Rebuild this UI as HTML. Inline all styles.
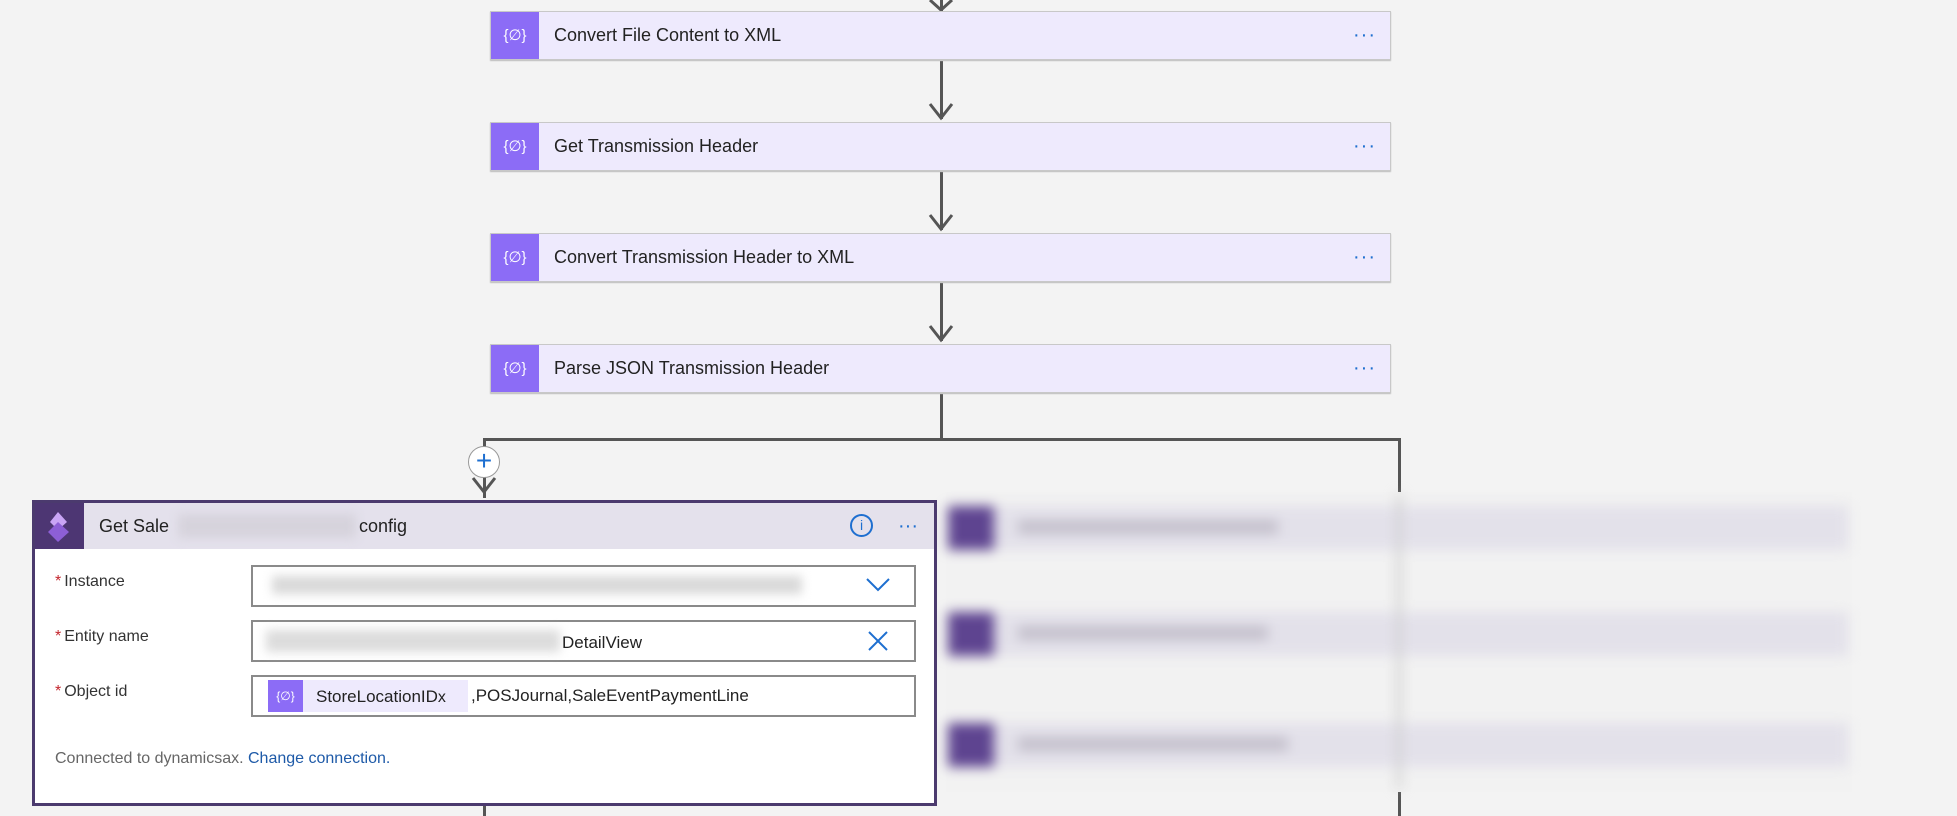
<!DOCTYPE html>
<html><head><style>
body{margin:0;width:1957px;height:816px;background:#f3f3f3;font-family:"Liberation Sans",sans-serif;position:relative;overflow:hidden}
.a{position:absolute}
.card{position:absolute;left:490px;width:899px;height:47px;background:#eeeafd;border:1px solid #c8c8c8;box-shadow:0 1px 1px #bbb}
.card .ic{position:absolute;left:0;top:0;width:48px;height:47px;background:#8c6cf6;color:#fff;font-size:15px;line-height:47px;text-align:center}
.card .t{position:absolute;left:63px;top:0;line-height:47px;font-size:18px;color:#222}
.card .d{position:absolute;right:14px;top:0;line-height:47px;font-size:20px;color:#1e6fd0;letter-spacing:1px}
.vl{position:absolute;width:3px;background:#555}
.lab{position:absolute;left:55px;font-size:16px;color:#333}
.lab b{color:#c4262e;font-weight:normal;margin-right:3px}
.inp{position:absolute;left:251px;width:661px;height:38px;border:2px solid #8a8a8a;background:#fff}
.blur{position:absolute;background:#cfcfcf;filter:blur(5px)}
</style></head><body>
<div class="vl" style="left:940px;top:0;height:11px"></div>
<svg class="a" style="left:926px;top:0" width="32" height="12"><polyline points="4,0 15,10 26,0" fill="none" stroke="#555" stroke-width="3"/></svg>
<div class="vl" style="left:940px;top:61px;height:58px"></div>
<svg class="a" style="left:926px;top:100px" width="32" height="22"><polyline points="4,4 15,18 26,4" fill="none" stroke="#555" stroke-width="3"/></svg>
<div class="vl" style="left:940px;top:172px;height:58px"></div>
<svg class="a" style="left:926px;top:211px" width="32" height="22"><polyline points="4,4 15,18 26,4" fill="none" stroke="#555" stroke-width="3"/></svg>
<div class="vl" style="left:940px;top:283px;height:58px"></div>
<svg class="a" style="left:926px;top:322px" width="32" height="22"><polyline points="4,4 15,18 26,4" fill="none" stroke="#555" stroke-width="3"/></svg>
<div class="vl" style="left:940px;top:394px;height:46px"></div>
<div class="a" style="left:483px;top:438px;width:918px;height:3px;background:#555"></div>
<div class="vl" style="left:483px;top:438px;height:60px"></div>
<div class="vl" style="left:1398px;top:438px;height:378px"></div>
<svg class="a" style="left:469px;top:474px" width="32" height="22"><polyline points="4,4 15,18 26,4" fill="none" stroke="#555" stroke-width="3"/></svg>
<div class="a" style="left:468px;top:446px;width:30px;height:30px;border-radius:50%;background:#fff;border:1px solid #999"></div>
<div class="a" style="left:470px;top:446px;width:28px;line-height:30px;text-align:center;color:#1e6fd0;font-size:28px">+</div>

<div class="card" style="top:11px"><div class="ic">{∅}</div><div class="t">Convert File Content to XML</div><div class="d">···</div></div>
<div class="card" style="top:122px"><div class="ic">{∅}</div><div class="t">Get Transmission Header</div><div class="d">···</div></div>
<div class="card" style="top:233px"><div class="ic">{∅}</div><div class="t">Convert Transmission Header to XML</div><div class="d">···</div></div>
<div class="card" style="top:344px"><div class="ic">{∅}</div><div class="t">Parse JSON Transmission Header</div><div class="d">···</div></div>

<!-- blurred right cards -->
<div class="a" style="left:946px;top:492px;width:906px;height:300px;background:#f2f2f2"></div>
<div class="a" style="left:948px;top:494px;width:900px;height:295px;filter:blur(6px)">
 <div class="a" style="left:0;top:12px;width:900px;height:44px;background:#e3e1ea"></div>
 <div class="a" style="left:0;top:12px;width:46px;height:44px;background:#5e4490"></div>
 <div class="a" style="left:70px;top:26px;width:260px;height:14px;background:#c4c0cc"></div>
 <div class="a" style="left:0;top:118px;width:900px;height:44px;background:#e3e1ea"></div>
 <div class="a" style="left:0;top:118px;width:46px;height:44px;background:#5e4490"></div>
 <div class="a" style="left:70px;top:132px;width:250px;height:14px;background:#c4c0cc"></div>
 <div class="a" style="left:0;top:229px;width:900px;height:44px;background:#e3e1ea"></div>
 <div class="a" style="left:0;top:229px;width:46px;height:44px;background:#5e4490"></div>
 <div class="a" style="left:70px;top:243px;width:270px;height:14px;background:#c4c0cc"></div>
 <div class="a" style="left:449px;top:0;width:4px;height:295px;background:#c8c8c8"></div>
</div>

<!-- big card -->
<div class="vl" style="left:483px;top:804px;height:12px"></div>
<div class="a" style="left:32px;top:500px;width:899px;height:300px;background:#fff;border:3px solid #4b3a6e"></div>
<div class="a" style="left:35px;top:503px;width:899px;height:46px;background:#e4e1ec"></div>
<div class="a" style="left:35px;top:503px;width:49px;height:46px;background:#4d3673"></div>
<svg class="a" style="left:45px;top:510px" width="28" height="34"><polygon points="13,2 22,12 13,20 5,12" fill="#c9a5f5"/><polygon points="13,12 24,22 13,32 3,22" fill="#8d5fd6"/></svg>
<div class="a" style="left:99px;top:503px;line-height:46px;font-size:18px;color:#222">Get Sale</div>
<div class="blur" style="left:178px;top:514px;width:178px;height:24px;background:#d6d3dc"></div>
<div class="a" style="left:359px;top:503px;line-height:46px;font-size:18px;color:#222">config</div>
<div class="a" style="left:850px;top:514px;width:19px;height:19px;border:2px solid #1e6fd0;border-radius:50%;color:#1e6fd0;font-size:14px;line-height:19px;text-align:center">i</div>
<div class="a" style="left:898px;top:503px;line-height:46px;font-size:20px;color:#1e6fd0">···</div>

<div class="lab" style="top:573px"><b>*</b>Instance</div>
<div class="lab" style="top:628px"><b>*</b>Entity name</div>
<div class="lab" style="top:683px"><b>*</b>Object id</div>
<div class="inp" style="top:565px"></div>
<div class="blur" style="left:272px;top:576px;width:530px;height:18px;background:#d9d9d9"></div>
<svg class="a" style="left:864px;top:575px" width="28" height="20"><polyline points="3,4 14,15 25,4" fill="none" stroke="#1e6fd0" stroke-width="2"/></svg>
<div class="inp" style="top:620px"></div>
<div class="blur" style="left:266px;top:630px;width:294px;height:22px;background:#dcdcdc"></div>
<div class="a" style="left:562px;top:630px;font-size:17px;line-height:26px;color:#222">DetailView</div>
<svg class="a" style="left:866px;top:629px" width="24" height="24"><path d="M3,3L21,21M21,3L3,21" stroke="#1e6fd0" stroke-width="2"/></svg>
<div class="inp" style="top:675px"></div>
<div class="a" style="left:268px;top:680px;width:200px;height:32px;background:#eeeafd"></div>
<div class="a" style="left:268px;top:680px;width:35px;height:32px;background:#8c6cf6;color:#fff;font-size:12px;line-height:32px;text-align:center">{∅}</div>
<div class="a" style="left:316px;top:680px;line-height:34px;font-size:17px;color:#222">StoreLocationID<span style="font-size:16px">x</span></div>
<div class="a" style="left:471px;top:680px;line-height:32px;font-size:17px;color:#222">,POSJournal,SaleEventPaymentLine</div>
<div class="a" style="left:55px;top:750px;font-size:16px;color:#666">Connected to dynamicsax. <span style="color:#1e5aa8">Change connection.</span></div>
</body></html>
